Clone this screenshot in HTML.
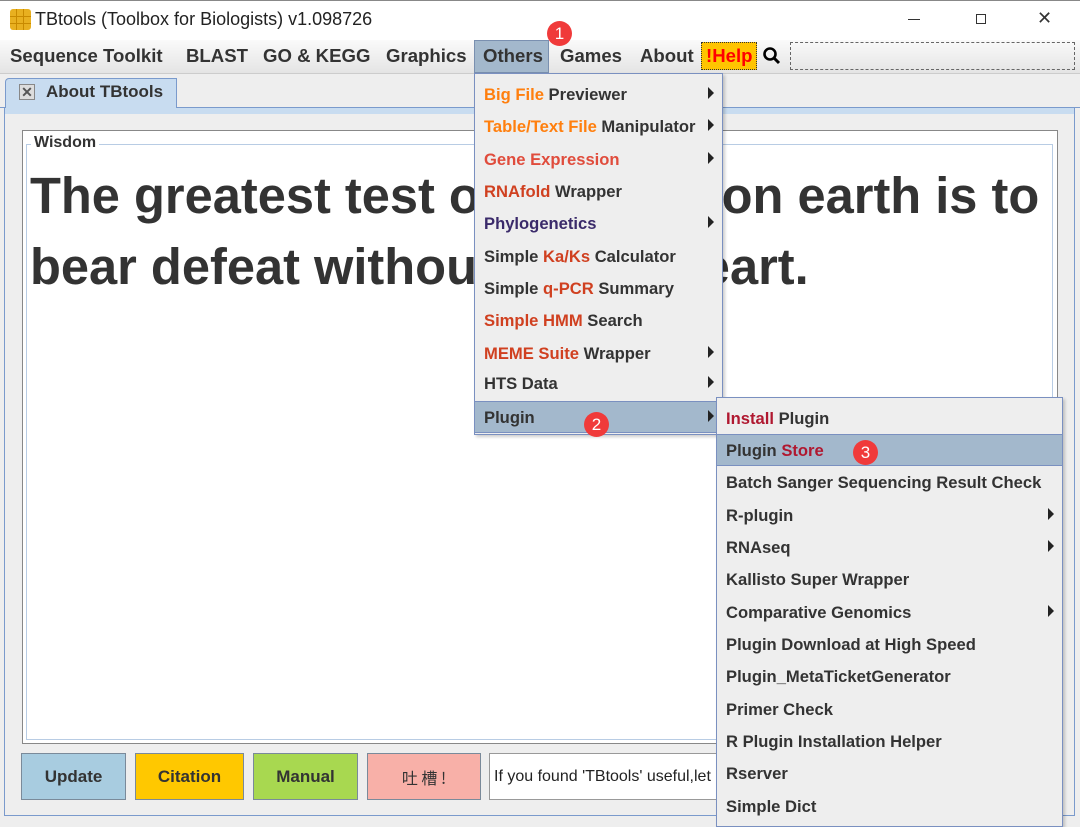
<!DOCTYPE html>
<html><head><meta charset="utf-8"><style>
*{margin:0;padding:0;box-sizing:border-box}
body{width:1080px;height:823px;overflow:hidden;background:#eeeeee;font-family:"Liberation Sans",Arial,sans-serif;position:relative;color:#333}
.a{position:absolute;white-space:nowrap}
.mb{font-weight:bold;font-size:18.6px;color:#333;top:45px}
.mi{position:absolute;left:0;right:0;height:32px;font-weight:bold;font-size:16.6px;color:#333;padding-left:9px;line-height:32px}
.ar{position:absolute;right:8px;top:8px;width:0;height:0;border-top:6px solid transparent;border-bottom:6px solid transparent;border-left:6px solid #222}
.o{color:#ff7f0e}.r{color:#e04c3c}.p{color:#3a2a6a}.d{color:#b01830}
.badge{position:absolute;width:25px;height:25px;border-radius:50%;background:#f03a3a;color:#fff;font-size:17px;text-align:center;line-height:25px}
.btn{position:absolute;top:753px;height:47px;border:1px solid #7a8a9a;font-weight:bold;font-size:17px;text-align:center;line-height:46px;color:#333}
</style></head><body>
<div class="a" style="left:0;top:0;width:1080px;height:40px;background:#fff;border-top:1px solid #888"></div>
<div class="a" style="left:10px;top:9px;width:21px;height:21px;background:#e8b020;border-radius:3px;background-image:linear-gradient(90deg,transparent 6px,#c88a00 6px,#c88a00 7px,transparent 7px,transparent 13px,#c88a00 13px,#c88a00 14px,transparent 14px),linear-gradient(0deg,transparent 6px,#c88a00 6px,#c88a00 7px,transparent 7px,transparent 13px,#c88a00 13px,#c88a00 14px,transparent 14px)"></div>
<div class="a" style="left:35px;top:9px;font-size:18px;color:#222">TBtools (Toolbox for Biologists) v1.098726</div>
<div class="a" style="left:908px;top:19px;width:12px;height:1px;background:#333"></div>
<div class="a" style="left:976px;top:14px;width:10px;height:10px;border:1px solid #333"></div>
<div class="a" style="left:1037px;top:8px;font-size:18px;color:#333">✕</div>
<div class="a" style="left:0;top:40px;width:1080px;height:34px;background:linear-gradient(#fafafa,#e4e4e4);border-bottom:1px solid #ccc"></div>
<div class="a mb" style="left:10px">Sequence Toolkit</div>
<div class="a mb" style="left:186px">BLAST</div>
<div class="a mb" style="left:263px">GO &amp; KEGG</div>
<div class="a mb" style="left:386px">Graphics</div>
<div class="a" style="left:474px;top:40px;width:75px;height:33px;background:#a3b8cc;border:1px solid #7a90b0"></div>
<div class="a mb" style="left:483px">Others</div>
<div class="a mb" style="left:560px">Games</div>
<div class="a mb" style="left:640px">About</div>
<div class="a" style="left:701px;top:42px;width:56px;height:28px;background:#ffc400;border:1px dotted #333"></div>
<div class="a mb" style="left:706px;color:#f00">!Help</div>
<svg class="a" style="left:762px;top:46px" width="20" height="20"><circle cx="8" cy="8" r="5.5" fill="none" stroke="#000" stroke-width="2.6"/><line x1="12" y1="12" x2="17" y2="17" stroke="#000" stroke-width="3"/></svg>
<div class="a" style="left:790px;top:42px;width:285px;height:28px;border:1px dashed #666"></div>
<div class="badge" style="left:547px;top:21px">1</div>
<div class="a" style="left:0;top:107px;width:1080px;height:1px;background:#7a9acc"></div>
<div class="a" style="left:5px;top:78px;width:172px;height:31px;background:#c8dcf0;border:1px solid #7a9acc;border-bottom:none;border-radius:4px 0 0 0"></div>
<div class="a" style="left:19px;top:84px;width:16px;height:16px;border:1px solid #888;background:#ddd;color:#555;font-size:14px;line-height:14px;text-align:center;font-weight:bold">✕</div>
<div class="a" style="left:46px;top:82px;font-weight:bold;font-size:17px;color:#333">About TBtools</div>
<div class="a" style="left:4px;top:108px;width:1071px;height:6px;background:#c8dcf0"></div>
<div class="a" style="left:4px;top:108px;width:1071px;height:708px;border:1px solid #7a9acc;border-top:none"></div>
<div class="a" style="left:22px;top:130px;width:1036px;height:614px;background:#fff;border:1px solid #888"></div>
<div class="a" style="left:26px;top:144px;width:1027px;height:596px;border:1px solid #b8cce4"></div>
<div class="a" style="left:31px;top:134px;font-weight:bold;font-size:16px;background:#fff;padding:0 3px">Wisdom</div>
<div class="a" style="left:30px;top:160px;font-weight:bold;font-size:50.6px;color:#333;line-height:71px;white-space:normal;width:1030px">The greatest test of courage on earth is to bear defeat without losing heart.</div>
<div class="btn" style="left:21px;width:105px;background:#a8cce0">Update</div>
<div class="btn" style="left:135px;width:109px;background:#ffc800">Citation</div>
<div class="btn" style="left:253px;width:105px;background:#a8d850">Manual</div>
<div class="btn" style="left:367px;width:114px;background:#f8b0a8;font-weight:normal;font-family:'Noto Sans CJK SC',sans-serif;font-size:16px">吐 槽 !</div>
<div class="a" style="left:489px;top:753px;width:240px;height:47px;background:#fff;border:1px solid #999;font-size:16px;line-height:45px;padding-left:4px;overflow:hidden;color:#222">If you found 'TBtools' useful,let</div>
<div class="a" style="left:474px;top:73px;width:249px;height:362px;background:#eeeeee;border:1px solid #7a90c0;box-shadow:2px 2px 3px rgba(0,0,0,.2)">
<div class="mi" style="top:5px"><span class="o">Big File</span> Previewer<i class="ar"></i></div>
<div class="mi" style="top:37px"><span class="o">Table/Text File</span> Manipulator<i class="ar"></i></div>
<div class="mi" style="top:70px"><span class="r">Gene Expression</span><i class="ar"></i></div>
<div class="mi" style="top:102px"><span class="r" style="color:#d04020">RNAfold</span> Wrapper</div>
<div class="mi" style="top:134px"><span class="p">Phylogenetics</span><i class="ar"></i></div>
<div class="mi" style="top:167px">Simple <span class="r" style="color:#d04020">Ka/Ks</span> Calculator</div>
<div class="mi" style="top:199px">Simple <span class="r" style="color:#d04020">q-PCR</span> Summary</div>
<div class="mi" style="top:231px"><span class="r" style="color:#d04020">Simple HMM</span> Search</div>
<div class="mi" style="top:264px"><span class="r" style="color:#d04020">MEME Suite</span> Wrapper<i class="ar"></i></div>
<div class="mi" style="top:294px">HTS Data<i class="ar"></i></div>
<div class="mi" style="top:327px;height:32px;background:#a3b8cc;border-top:1px solid #7a90c0;border-bottom:1px solid #7a90c0">Plugin<i class="ar"></i></div>
</div>
<div class="badge" style="left:584px;top:412px">2</div>
<div class="a" style="left:716px;top:397px;width:347px;height:430px;background:#eeeeee;border:1px solid #7a90c0;box-shadow:2px 2px 3px rgba(0,0,0,.2)">
<div class="mi" style="top:5px"><span class="d">Install</span> Plugin</div>
<div class="mi" style="top:36px;height:32px;background:#a3b8cc;border-top:1px solid #7a90c0;border-bottom:1px solid #7a90c0">Plugin <span class="d">Store</span></div>
<div class="mi" style="top:69px">Batch Sanger Sequencing Result Check</div>
<div class="mi" style="top:102px">R-plugin<i class="ar"></i></div>
<div class="mi" style="top:134px">RNAseq<i class="ar"></i></div>
<div class="mi" style="top:166px">Kallisto Super Wrapper</div>
<div class="mi" style="top:199px">Comparative Genomics<i class="ar"></i></div>
<div class="mi" style="top:231px">Plugin Download at High Speed</div>
<div class="mi" style="top:263px">Plugin_MetaTicketGenerator</div>
<div class="mi" style="top:296px">Primer Check</div>
<div class="mi" style="top:328px">R Plugin Installation Helper</div>
<div class="mi" style="top:360px">Rserver</div>
<div class="mi" style="top:393px">Simple Dict</div>
</div>
<div class="badge" style="left:853px;top:440px">3</div>
</body></html>
